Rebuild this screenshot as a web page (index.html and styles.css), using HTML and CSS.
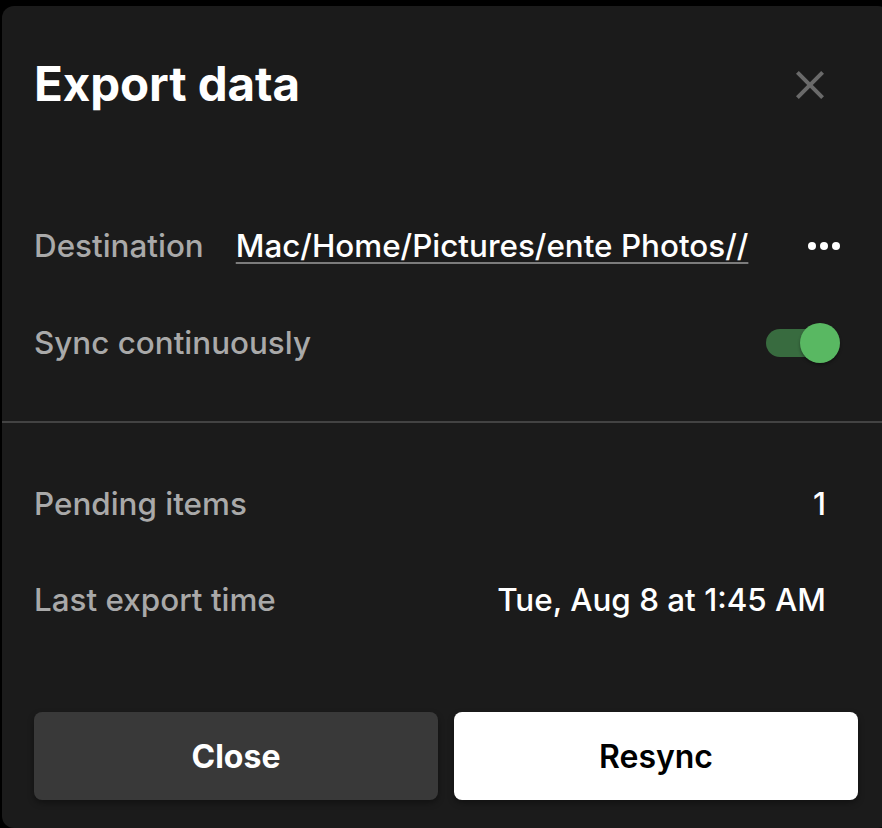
FILE: index.html
```html
<!DOCTYPE html>
<html lang="en">
<head>
<meta charset="utf-8">
<title>Export data</title>
<link rel="stylesheet" href="styles.css">
</head>
<body>
<div class="dialog">
  <div class="header">
    <h1 class="title">Export data</h1>
    <button class="icon-btn close-x" aria-label="Close">
      <svg viewBox="0 0 24 24" width="48" height="48"><path fill="currentColor" d="M19 6.41 17.59 5 12 10.59 6.41 5 5 6.41 10.59 12 5 17.59 6.41 19 12 13.41 17.59 19 19 17.59 13.41 12z"/></svg>
    </button>
  </div>

  <div class="section first">
    <div class="row">
      <div class="row-left">
        <span class="label">Destination</span>
        <a class="path" href="#">Mac/Home/Pictures/ente Photos//</a>
      </div>
      <button class="icon-btn more" aria-label="More">
        <svg viewBox="0 0 24 24" width="48" height="48"><circle cx="6" cy="12" r="2" fill="#fff"/><circle cx="12" cy="12" r="2" fill="#fff"/><circle cx="18" cy="12" r="2" fill="#fff"/></svg>
      </button>
    </div>
    <div class="row">
      <span class="label">Sync continuously</span>
      <span class="switch">
        <span class="track"></span>
        <span class="thumb"></span>
      </span>
    </div>
  </div>

  <div class="divider"></div>

  <div class="section second">
    <div class="row">
      <span class="label">Pending items</span>
      <span class="value">1</span>
    </div>
    <div class="row">
      <span class="label">Last export time</span>
      <span class="value">Tue, Aug 8 at 1:45 AM</span>
    </div>
  </div>

  <div class="actions">
    <button class="btn btn-secondary">Close</button>
    <button class="btn btn-primary">Resync</button>
  </div>
</div>
</body>
</html>
```

FILE: styles.css
```css
* { box-sizing: border-box; }

html, body {
  margin: 0;
  padding: 0;
  background: #000;
  height: 828px;
  overflow: hidden;
}

body {
  font-family: Inter, "Noto Sans", "Liberation Sans", sans-serif;
  color: #fff;
}

.dialog {
  margin: 6px 0 0 2px;
  width: 888px;
  height: 822px;
  background: #1b1b1b;
  border-radius: 12px;
  display: flex;
  flex-direction: column;
}

.header {
  margin-top: 38px;
  height: 80px;
  padding: 0 32px;
  display: flex;
  align-items: center;
  justify-content: space-between;
}

.title {
  margin: 0;
  font-size: 47.5px;
  font-weight: 700;
  line-height: 1.21;
  letter-spacing: -0.1px;
}

.icon-btn {
  background: none;
  border: 0;
  padding: 0;
  margin: 0;
  display: flex;
  align-items: center;
  justify-content: center;
  cursor: pointer;
}

.close-x {
  color: #6a6a6a;
  margin-right: 24px;
  margin-top: 2px;
}

.section {
  padding: 0 32px;
  display: flex;
  flex-direction: column;
}

.section.first {
  margin-top: 73px;
}

.section.first .row {
  height: 97px;
}

.section.second {
  margin-top: 33px;
}

.section.second .row {
  height: 96px;
}

.row {
  display: flex;
  align-items: center;
  justify-content: space-between;
}

.row-left {
  display: flex;
  align-items: center;
  gap: 32px;
}

.label {
  font-size: 31.4px;
  font-weight: 500;
  color: #a9a9a9;
  line-height: 1.21;
}

.path {
  font-size: 31.4px;
  font-weight: 500;
  color: #fff;
  line-height: 1.21;
  text-decoration: underline;
  text-decoration-color: #7c7c7c;
  text-decoration-thickness: 2px;
  text-underline-offset: 5px;
}

.more {
  margin-right: 10px;
}

.switch {
  position: relative;
  width: 92px;
  height: 40px;
  display: block;
}

.track {
  position: absolute;
  left: 0;
  top: 6px;
  width: 68px;
  height: 28px;
  border-radius: 14px;
  background: #386b3f;
}

.thumb {
  position: absolute;
  right: 18px;
  top: 0;
  width: 40px;
  height: 40px;
  border-radius: 50%;
  background: #59b862;
  box-shadow: 0 2px 3px rgba(0, 0, 0, 0.35);
}

.value {
  font-size: 31.4px;
  font-weight: 500;
  color: #fff;
  line-height: 1.21;
  margin-right: 32px;
}

.divider {
  margin-top: 30px;
  height: 2px;
  background: #434343;
}

.actions {
  margin-top: 64px;
  padding: 0 32px;
  display: flex;
  gap: 16px;
}

.btn {
  flex: 1;
  height: 88px;
  border: 0;
  border-radius: 8px;
  font-family: Inter, "Noto Sans", "Liberation Sans", sans-serif;
  font-size: 32px;
  cursor: pointer;
  box-shadow: 0 3px 6px rgba(0, 0, 0, 0.35);
}

.btn-secondary {
  background: #393939;
  color: #fff;
  font-weight: 700;
}

.btn-primary {
  background: #fff;
  color: #000;
  font-weight: 600;
}
```
